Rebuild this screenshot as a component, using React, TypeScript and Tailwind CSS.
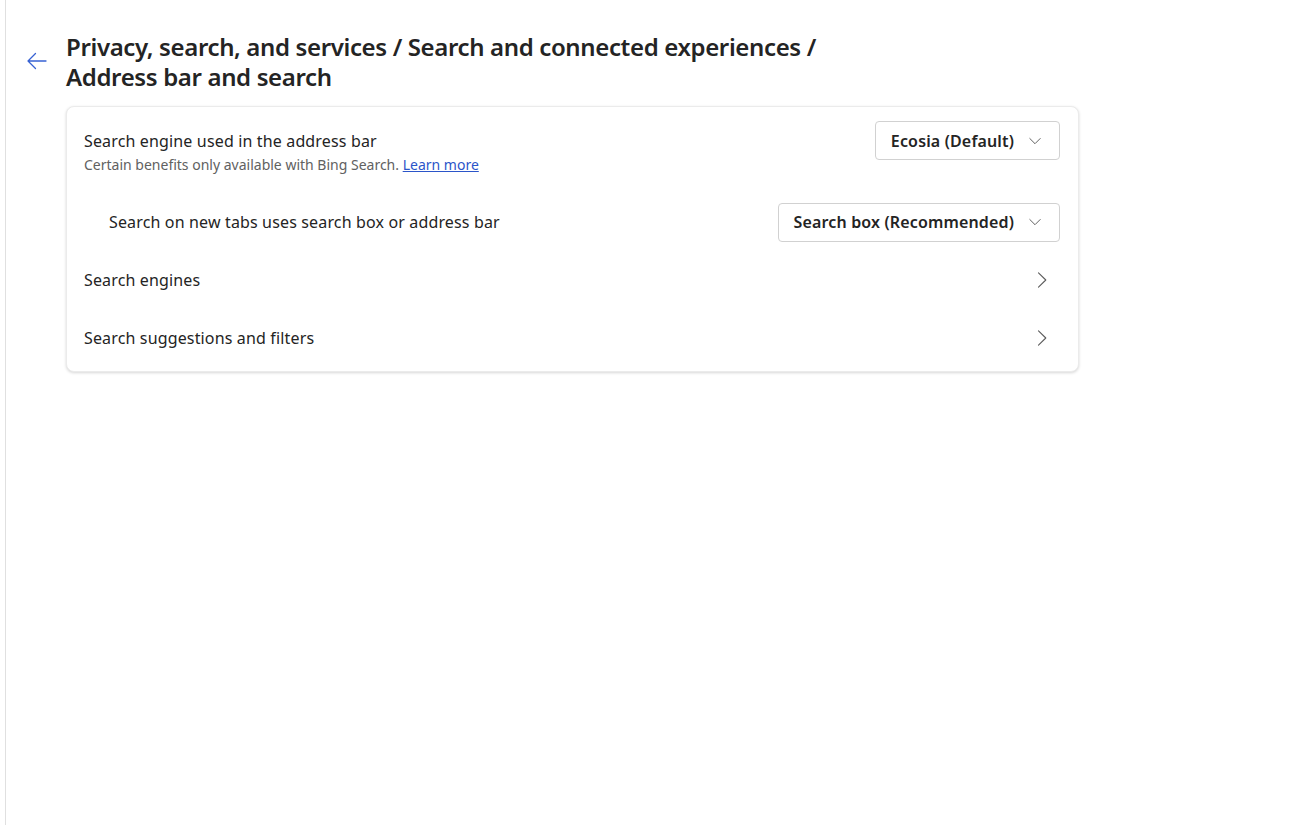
import React from "react";

const font = { fontFamily: '"Noto Sans", "Open Sans", sans-serif' };

function Chevron() {
  return (
    <svg width="16" height="16" viewBox="0 0 16 16" fill="none">
      <path d="M4.5 0.8 11.8 8 4.5 15.2" stroke="#5c5c5c" strokeWidth="1.1" strokeLinecap="round" strokeLinejoin="round" />
    </svg>
  );
}

function Caret() {
  return (
    <svg width="12" height="12" viewBox="0 0 12 12" fill="none">
      <path d="M0.8 3.5 6 8.7l5.2-5.2" stroke="#616161" strokeWidth="1" strokeLinecap="round" strokeLinejoin="round" />
    </svg>
  );
}

function Select({ label }: { label: string }) {
  return (
    <button className="flex h-[39px] items-center gap-[15px] rounded-[4px] border border-[#d1d1d1] bg-white pl-[15px] pr-[18px] text-[16px] font-semibold tracking-[0.15px] text-[#242424]">
      <span>{label}</span>
      <Caret />
    </button>
  );
}

export default function App() {
  return (
    <div className="flex h-[825px] w-full bg-white text-[#242424]" style={font}>
      <div className="w-[5px] shrink-0" />
      <div className="flex-1 border-l border-[#e0e0e0]">
        <div className="flex pt-[32px]">
          <div className="flex w-[60px] shrink-0 justify-end pr-[18px] pt-[19px]">
            <svg width="22" height="20" viewBox="0 0 22 20" fill="none">
              <path d="M20 10H2M9.5 2.5 2 10l7.5 7.5" stroke="#3762d3" strokeWidth="1.3" strokeLinecap="round" strokeLinejoin="round" />
            </svg>
          </div>
          <div className="w-[1013px]">
            <h1 className="text-[24px] font-semibold leading-[30px] tracking-[-0.36px] text-[#242424]">
              Privacy, search, and services / Search and connected experiences /<br />
              Address bar and search
            </h1>
            <div className="mt-[14px] rounded-[8px] border border-[#ebebeb] bg-white pb-[4px] shadow-[0_1px_3px_rgba(0,0,0,0.16)]">
              <div className="flex h-[86px] items-start justify-between pl-[17px] pr-[18px] pt-[14px]">
                <div className="pt-[9px]">
                  <div className="text-[16px] leading-[22px] tracking-[0.15px]">Search engine used in the address bar</div>
                  <div className="mt-[3px] text-[14px] leading-[20px] text-[#616161]">
                    Certain benefits only available with Bing Search.{" "}
                    <a className="text-[#2b55c9] underline">Learn more</a>
                  </div>
                </div>
                <Select label="Ecosia (Default)" />
              </div>
              <div className="flex h-[58px] items-center justify-between pl-[42px] pr-[18px]">
                <div className="text-[16px] leading-[22px] tracking-[0.15px]">Search on new tabs uses search box or address bar</div>
                <Select label="Search box (Recommended)" />
              </div>
              <div className="flex h-[58px] items-center justify-between pl-[17px] pr-[28px]">
                <div className="text-[16px] leading-[22px] tracking-[0.15px]">Search engines</div>
                <Chevron />
              </div>
              <div className="flex h-[58px] items-center justify-between pl-[17px] pr-[28px]">
                <div className="text-[16px] leading-[22px] tracking-[0.15px]">Search suggestions and filters</div>
                <Chevron />
              </div>
            </div>
          </div>
        </div>
      </div>
    </div>
  );
}
